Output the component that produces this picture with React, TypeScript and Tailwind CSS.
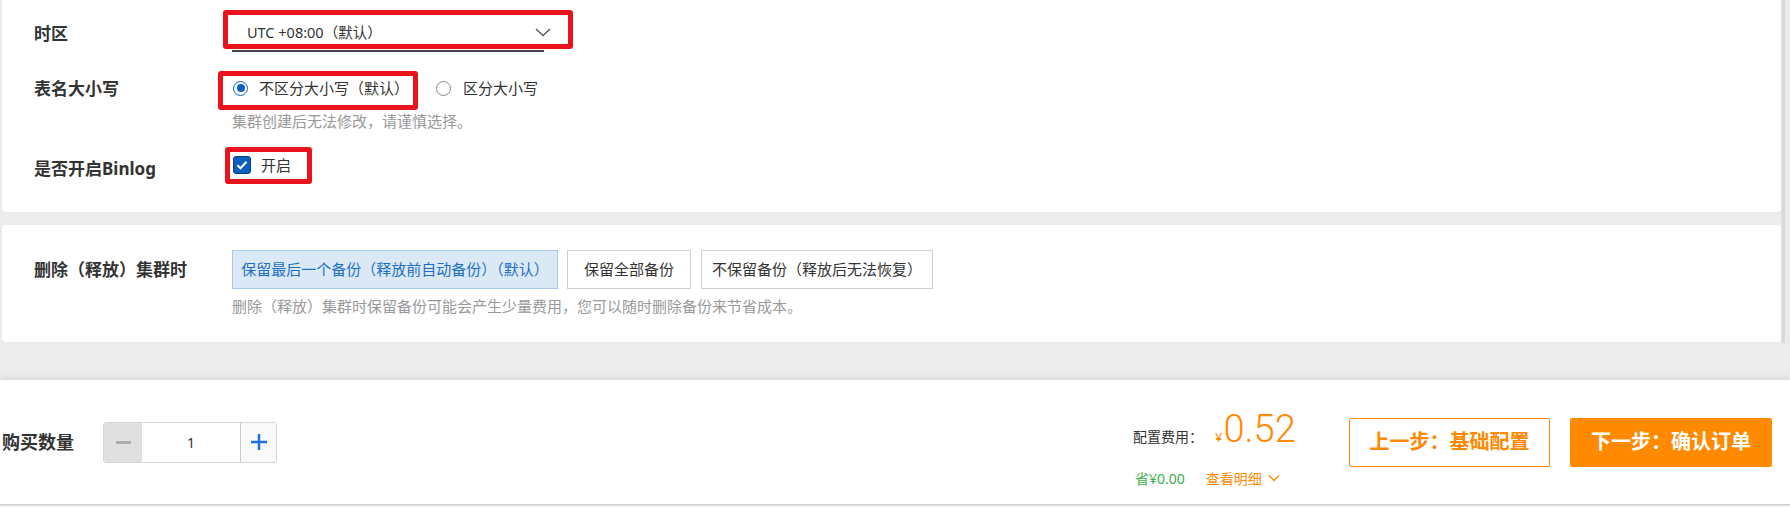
import React from "react";

function Chevron() {
  return (
    <svg width="16" height="9" viewBox="0 0 16 9" fill="none" className="mr-[-7px]">
      <path d="M1 1l7 6.5L15 1" stroke="#555" strokeWidth="1.3" />
    </svg>
  );
}

function RedBox({ cls }: { cls: string }) {
  return <div className={"absolute border-[5px] border-[#e8131b] rounded-[3px] pointer-events-none " + cls} />;
}

export default function App() {
  return (
    <div className="relative w-[1790px] h-[507px] overflow-hidden bg-[#ececec] font-['Noto_Sans','Noto_Sans_CJK_SC',sans-serif] text-[#333]">
      <div className="flex h-[380px]">
        <div className="ml-[2px] w-[1779px] flex flex-col">
          {/* panel 1 */}
          <div className="h-[212px] bg-white rounded-b-[4px] pl-[32px] pt-[15px]">
            <div className="flex items-center h-[37px]">
              <div className="w-[198px] text-[17px] font-bold leading-none">时区</div>
              <div className="w-[312px] h-[37px] border-b-2 border-[#444] flex items-center justify-between pl-[15px]">
                <span className="text-[14.5px] leading-none">UTC +08:00（默认）</span>
                <Chevron />
              </div>
            </div>

            <div className="flex items-start mt-[25px]">
              <div className="w-[198px] h-[22px] flex items-center text-[17px] font-bold leading-none">表名大小写</div>
              <div className="flex flex-col">
                <div className="flex items-center h-[22px] text-[15px]">
                  <span className="ml-[1px] w-[15px] h-[15px] rounded-full border-[1.5px] border-[#0b62c4] flex items-center justify-center">
                    <span className="w-[8px] h-[8px] rounded-full bg-[#0b62c4]" />
                  </span>
                  <span className="ml-[11px]">不区分大小写（默认）</span>
                  <span className="ml-[27px] w-[15px] h-[15px] rounded-full border border-[#8a8a8a]" />
                  <span className="ml-[12px]">区分大小写</span>
                </div>
                <div className="mt-[13px] text-[15px] leading-[18px] text-[#999]">集群创建后无法修改，请谨慎选择。</div>
              </div>
            </div>

            <div className="flex items-center mt-[24px] h-[22px]">
              <div className="w-[198px] text-[17px] font-bold leading-none mt-[6px]">是否开启Binlog</div>
              <span className="ml-[1px] w-[18px] h-[18px] rounded-[3px] bg-[#0d5fbf] border border-[#0a3f80] flex items-center justify-center">
                <svg width="12" height="10" viewBox="0 0 12 10" fill="none">
                  <path d="M1.5 5.2l3 3L10.5 1.8" stroke="#fff" strokeWidth="2" />
                </svg>
              </span>
              <span className="ml-[10px] text-[15px]">开启</span>
            </div>
          </div>

          {/* panel 2 */}
          <div className="mt-[13px] h-[117px] bg-white rounded-[4px] pl-[32px] pt-[25px]">
            <div className="flex items-center h-[39px]">
              <div className="w-[198px] text-[17px] font-bold leading-none">删除（释放）集群时</div>
              <div className="flex gap-[9px] text-[15px]">
                <div className="w-[326px] h-[39px] flex items-center justify-center bg-[#dbe9f6] border border-[#a9c9e8] text-[#1d6fc2]">保留最后一个备份（释放前自动备份）（默认）</div>
                <div className="w-[124px] h-[39px] flex items-center justify-center border border-[#cfcfcf]">保留全部备份</div>
                <div className="ml-[1px] w-[232px] h-[39px] flex items-center justify-center border border-[#cfcfcf]">不保留备份（释放后无法恢复）</div>
              </div>
            </div>
            <div className="ml-[198px] mt-[8px] text-[15px] leading-[18px] text-[#999]">删除（释放）集群时保留备份可能会产生少量费用，您可以随时删除备份来节省成本。</div>
          </div>
        </div>
        {/* scroll strip */}
        <div className="flex h-[343px]">
          <div className="w-[1px] bg-[#e4e4e4]" />
          <div className="w-[3px] bg-[#d9d9d9]" />
          <div className="w-[5px] bg-[#ebebeb]" />
        </div>
      </div>

      {/* footer */}
      <div className="h-[125px] bg-white border-b border-[#c9c9c9] shadow-[0_-3px_6px_rgba(0,0,0,0.07)] flex items-center">
        <div className="pl-[2px] w-[103px] text-[18px] font-bold leading-none">购买数量</div>
        <div className="flex h-[41px] w-[174px] border border-[#d5d5d5] rounded-[3px] overflow-hidden">
          <div className="w-[38px] bg-[#e0e0e0] flex items-center justify-center">
            <div className="w-[15px] h-[3px] bg-[#adadad]" />
          </div>
          <div className="flex-1 flex items-center justify-center text-[14px]">1</div>
          <div className="w-[36px] bg-[#f9f9f9] border-l border-[#cccccc] flex items-center justify-center">
            <svg width="16" height="16" viewBox="0 0 16 16">
              <path d="M8 0v16M0 8h16" stroke="#1d74dc" strokeWidth="2.5" />
            </svg>
          </div>
        </div>

        <div className="ml-auto self-stretch flex">
          <div className="w-[216px] flex flex-col pt-[29px]">
            <div className="flex items-baseline h-[40px] leading-[40px]">
              <span className="text-[14px] text-[#333]">配置费用：</span>
              <span className="ml-[12px] text-[13px] text-[#ff8a00]">¥</span>
              <span className="ml-[1px] text-[38px] font-light text-[#ff8a00] font-['Roboto',sans-serif]">0.52</span>
            </div>
            <div className="mt-[20px] flex items-center h-[18px] text-[14px]">
              <span className="ml-[2px] text-[#3cae4a]">省¥0.00</span>
              <span className="ml-[21px] text-[#ff8a00]">查看明细</span>
              <svg width="12" height="8" viewBox="0 0 12 8" fill="none" className="ml-[6px]">
                <path d="M1 1.5l5 5 5-5" stroke="#ff8a00" strokeWidth="1.3" />
              </svg>
            </div>
          </div>
          <div className="flex items-center gap-[20px] pr-[18px]">
            <div className="w-[201px] h-[49px] border border-[#ff8a00] rounded-[2px] flex items-center justify-center text-[20px] font-bold text-[#ff8a00]">上一步：基础配置</div>
            <div className="w-[202px] h-[49px] bg-[#ff8a00] rounded-[2px] flex items-center justify-center text-[20px] font-bold text-white">下一步：确认订单</div>
          </div>
        </div>
      </div>

      <RedBox cls="left-[223px] top-[10px] w-[350px] h-[39px]" />
      <RedBox cls="left-[218px] top-[71px] w-[200px] h-[39px]" />
      <RedBox cls="left-[225px] top-[147px] w-[87px] h-[37px]" />
    </div>
  );
}
